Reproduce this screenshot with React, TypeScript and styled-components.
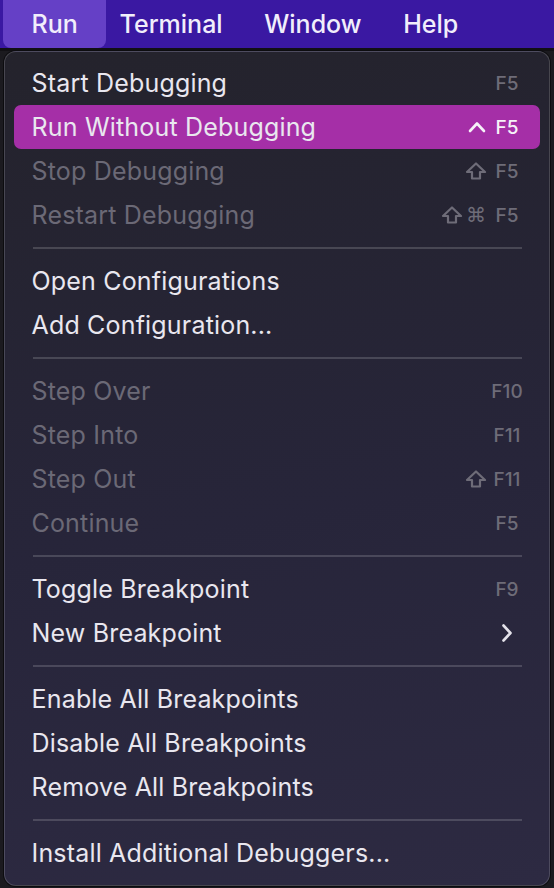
import React from 'react';
import styled, { createGlobalStyle } from 'styled-components';

const GlobalStyle = createGlobalStyle`
  html, body {
    margin: 0;
    padding: 0;
    background: #1b1a1f;
  }
  body {
    font-family: Inter, "Noto Sans", "Liberation Sans", sans-serif;
    -webkit-font-smoothing: antialiased;
  }
`;

const Screen = styled.div`
  width: 554px;
  height: 888px;
  display: flex;
  flex-direction: column;
  overflow: hidden;
`;

const MenuBar = styled.div`
  height: 48px;
  display: flex;
  align-items: stretch;
  padding-left: 10.5px;
  background: #3a18a2;
  border-bottom: 3px solid #111014;
`;

const BarItem = styled.div<{ $active?: boolean }>`
  display: flex;
  align-items: center;
  padding: 0 ${(p) => (p.$active ? 28.5 : 20.8)}px;
  margin: 0 ${(p) => (p.$active ? -7.5 : 0)}px;
  border-radius: 0 0 8px 8px;
  background: ${(p) => (p.$active ? '#6540c6' : 'transparent')};
  color: #f1eefb;
  font-size: 25px;
  font-weight: 500;
`;

const Panel = styled.div`
  margin: 0 4px;
  padding: 9px 9px 10px;
  border-radius: 12px;
  background: linear-gradient(170deg, #24232c 0%, #27253a 55%, #2d2a42 100%);
  border: 1px solid rgba(255, 255, 255, 0.16);
  box-shadow: 0 0 0 1px #0c0c0f;
  display: flex;
  flex-direction: column;
`;

const Row = styled.div<{ $highlight?: boolean; $disabled?: boolean }>`
  height: 44px;
  display: flex;
  align-items: center;
  padding: 0 15px 0 17.5px;
  border-radius: 7px;
  background: ${(p) => (p.$highlight ? '#a52fa7' : 'transparent')};
  color: ${(p) => (p.$disabled ? '#6b6976' : '#e9e7ef')};
`;

const Label = styled.span`
  flex: 1;
  font-size: 25px;
  font-weight: 400;
  letter-spacing: 0.18px;
`;

const Shortcut = styled.div<{ $bright?: boolean }>`
  display: flex;
  align-items: center;
  gap: 2px;
  color: ${(p) => (p.$bright ? '#f6f2f8' : '#6e6c78')};
`;

const Mods = styled.div`
  display: flex;
  align-items: center;
  gap: 2px;
`;

const Key = styled.span`
  width: 36px;
  text-align: center;
  font-size: 19px;
  font-weight: 500;
`;

const Cmd = styled.span`
  font-family: "DejaVu Sans", sans-serif;
  font-size: 20px;
  width: 22px;
  text-align: center;
`;

const Separator = styled.div`
  height: 2px;
  margin: 10px 18px 10px 19px;
  background: rgba(255, 255, 255, 0.16);
`;

const ChevronWrap = styled.div`
  width: 36px;
  display: flex;
  justify-content: center;
  color: #e4e2ea;
`;

const ShiftIcon = () => (
  <svg width="22" height="18" viewBox="0 0 22 18" fill="none">
    <path
      d="M11 1.5 L20 10 H15 V16.5 H7 V10 H2 Z"
      stroke="currentColor"
      strokeWidth="2.2"
      strokeLinejoin="round"
    />
  </svg>
);

const CtrlIcon = () => (
  <svg width="20" height="14" viewBox="0 0 20 14" fill="none">
    <path d="M3 11 L10 3.5 L17 11" stroke="currentColor" strokeWidth="2.6" strokeLinecap="round" strokeLinejoin="round" />
  </svg>
);

const Chevron = () => (
  <svg width="12" height="20" viewBox="0 0 12 20" fill="none">
    <path d="M2.5 2.5 L9.5 10 L2.5 17.5" stroke="currentColor" strokeWidth="2.6" strokeLinecap="round" strokeLinejoin="round" />
  </svg>
);

type Mod = 'shift' | 'cmd' | 'ctrl';

type Item =
  | { kind: 'sep' }
  | {
      kind: 'item';
      label: string;
      keyName?: string;
      mods?: Mod[];
      disabled?: boolean;
      highlight?: boolean;
      submenu?: boolean;
    };

const items: Item[] = [
  { kind: 'item', label: 'Start Debugging', keyName: 'F5' },
  { kind: 'item', label: 'Run Without Debugging', keyName: 'F5', mods: ['ctrl'], highlight: true },
  { kind: 'item', label: 'Stop Debugging', keyName: 'F5', mods: ['shift'], disabled: true },
  { kind: 'item', label: 'Restart Debugging', keyName: 'F5', mods: ['shift', 'cmd'], disabled: true },
  { kind: 'sep' },
  { kind: 'item', label: 'Open Configurations' },
  { kind: 'item', label: 'Add Configuration...' },
  { kind: 'sep' },
  { kind: 'item', label: 'Step Over', keyName: 'F10', disabled: true },
  { kind: 'item', label: 'Step Into', keyName: 'F11', disabled: true },
  { kind: 'item', label: 'Step Out', keyName: 'F11', mods: ['shift'], disabled: true },
  { kind: 'item', label: 'Continue', keyName: 'F5', disabled: true },
  { kind: 'sep' },
  { kind: 'item', label: 'Toggle Breakpoint', keyName: 'F9' },
  { kind: 'item', label: 'New Breakpoint', submenu: true },
  { kind: 'sep' },
  { kind: 'item', label: 'Enable All Breakpoints' },
  { kind: 'item', label: 'Disable All Breakpoints' },
  { kind: 'item', label: 'Remove All Breakpoints' },
  { kind: 'sep' },
  { kind: 'item', label: 'Install Additional Debuggers...' },
];

const renderMod = (m: Mod) => {
  if (m === 'shift') return <ShiftIcon key={m} />;
  if (m === 'ctrl') return <CtrlIcon key={m} />;
  return <Cmd key={m}>⌘</Cmd>;
};

export default function App() {
  return (
    <Screen>
      <GlobalStyle />
      <MenuBar>
        <BarItem $active>Run</BarItem>
        <BarItem>Terminal</BarItem>
        <BarItem>Window</BarItem>
        <BarItem>Help</BarItem>
      </MenuBar>
      <Panel>
        {items.map((it, i) =>
          it.kind === 'sep' ? (
            <Separator key={i} />
          ) : (
            <Row key={i} $highlight={it.highlight} $disabled={it.disabled}>
              <Label>{it.label}</Label>
              {it.keyName && (
                <Shortcut $bright={it.highlight}>
                  {it.mods && <Mods>{it.mods.map(renderMod)}</Mods>}
                  <Key>{it.keyName}</Key>
                </Shortcut>
              )}
              {it.submenu && (
                <ChevronWrap>
                  <Chevron />
                </ChevronWrap>
              )}
            </Row>
          )
        )}
      </Panel>
    </Screen>
  );
}
